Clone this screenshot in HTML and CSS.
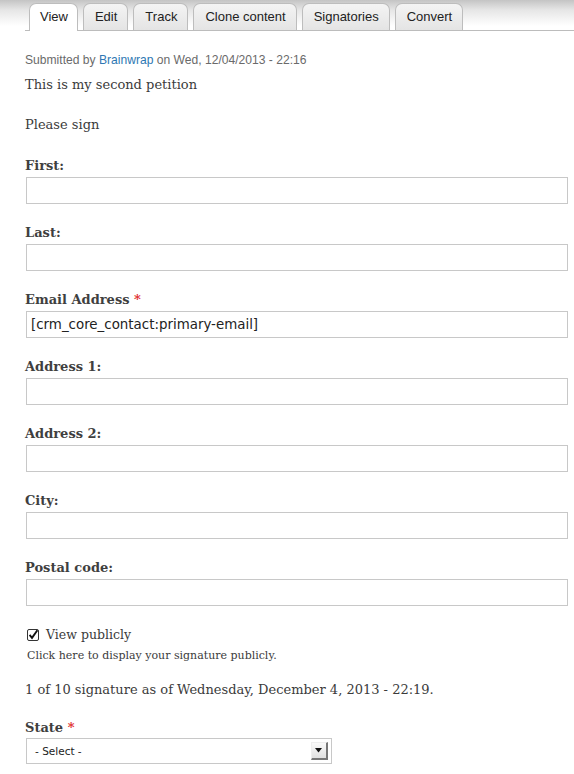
FILE: index.html
```html
<!DOCTYPE html>
<html>
<head>
<meta charset="utf-8">
<link rel="stylesheet" href="styles.css">
</head>
<body>
<div class="top">
  <ul class="tabs">
    <li class="tab active">View</li>
    <li class="tab">Edit</li>
    <li class="tab">Track</li>
    <li class="tab">Clone content</li>
    <li class="tab">Signatories</li>
    <li class="tab">Convert</li>
  </ul>
</div>
<div class="content">
  <div class="submitted">Submitted by <a href="#" class="user">Brainwrap</a> on Wed, 12/04/2013 - 22:16</div>
  <p class="body-p first-p">This is my second petition</p>
  <p class="body-p">Please sign</p>
  <form class="form">
    <div class="field"><label class="lbl">First:</label><input class="text" type="text"></div>
    <div class="field"><label class="lbl">Last:</label><input class="text" type="text"></div>
    <div class="field"><label class="lbl">Email Address <span class="req">*</span></label><input class="text" type="text" value="[crm_core_contact:primary-email]"></div>
    <div class="field"><label class="lbl">Address 1:</label><input class="text" type="text"></div>
    <div class="field"><label class="lbl">Address 2:</label><input class="text" type="text"></div>
    <div class="field"><label class="lbl">City:</label><input class="text" type="text"></div>
    <div class="field"><label class="lbl">Postal code:</label><input class="text" type="text"></div>
    <div class="check">
      <div class="check-row">
        <span class="box"><svg width="12" height="12" viewBox="0 0 12 12"><rect x="0.5" y="0.5" width="11" height="11" rx="1.5" fill="#fff" stroke="#333"/><path d="M2.6 5.8 L5 8.8 L10.4 1.2" fill="none" stroke="#111" stroke-width="1.9"/></svg></span>
        <span class="check-lbl">View publicly</span>
      </div>
      <div class="desc">Click here to display your signature publicly.</div>
    </div>
    <p class="count">1 of 10 signature as of Wednesday, December 4, 2013 - 22:19.</p>
    <div class="field state"><label class="lbl">State <span class="req">*</span></label>
      <div class="select"><span class="sel-text">- Select -</span><span class="sel-btn"><svg width="8" height="5" viewBox="0 0 8 5"><path d="M0 0H7L3.5 4.5Z" fill="#111"/></svg></span></div>
    </div>
  </form>
</div>
</body>
</html>
```

FILE: styles.css
```css
html, body {
  margin: 0;
  padding: 0;
  background: #fff;
}
body {
  font-family: "DejaVu Serif", Georgia, serif;
  color: #3b3b3b;
  width: 574px;
  overflow: hidden;
}
.top {
  background: linear-gradient(to bottom, #c4c4c4 0px, #e6e6e6 10px, #fff 26px);
  padding-top: 3px;
}
.tabs {
  list-style: none;
  margin: 0 0 0 25px;
  padding: 0 0 0 4px;
  display: flex;
  gap: 5px;
  border-bottom: 1px solid #bcbcbc;
}
.tab {
  font-family: "Liberation Sans", Arial, sans-serif;
  font-size: 13px;
  color: #222;
  height: 26px;
  line-height: 26px;
  padding: 0 10px 0 11px;
  border: 1px solid #bdbdbd;
  border-bottom: none;
  border-radius: 7px 7px 0 0;
  background: linear-gradient(to bottom, #f4f4f4, #e4e4e4);
}
.tab.active {
  background: #fff;
  margin-bottom: -1px;
  height: 27px;
  padding: 0 9px 0 10px;
}
.content {
  padding: 0 6px 0 25px;
}
.submitted {
  font-family: "Liberation Sans", Arial, sans-serif;
  font-size: 12.1px;
  color: #6a6a6a;
  margin-top: 22px;
  line-height: 15px;
}
.user {
  color: #2e77b3;
  text-decoration: none;
}
.body-p {
  font-size: 13px;
  margin: 0;
  line-height: 20px;
}
.first-p {
  margin-top: 7px;
}
.body-p + .body-p {
  margin-top: 20px;
}
.form {
  margin: 0;
  padding-top: 23px;
}
.field {
  display: flex;
  flex-direction: column;
  margin-bottom: 21px;
}
.lbl {
  font-weight: bold;
  font-size: 13px;
  line-height: 16px;
  color: #3f3f3f;
  margin-bottom: 3px;
}
.req {
  color: #e03030;
}
.text {
  box-sizing: border-box;
  margin: 0 0 0 1px;
  width: 542px;
  height: 27px;
  border: 1px solid #c8c8c8;
  border-radius: 0;
  padding: 2px 4px;
  font-family: "DejaVu Sans", sans-serif;
  font-size: 13.4px;
  color: #222;
  outline: none;
}
.check {
  margin-top: 0;
}
.check-row {
  display: flex;
  align-items: center;
  gap: 7px;
  padding-left: 2px;
}
.box {
  display: flex;
  width: 12px;
  height: 12px;
}
.check-lbl {
  font-size: 12.5px;
  line-height: 16px;
}
.desc {
  font-size: 11px;
  margin-top: 6px;
  margin-left: 2px;
  line-height: 14px;
}
.count {
  font-size: 13px;
  margin: 17px 0 0;
  line-height: 20px;
}
.state {
  margin-top: 20px;
}
.state .lbl {
  margin-bottom: 2px;
}
.select {
  box-sizing: border-box;
  margin-left: 1px;
  width: 306px;
  height: 26px;
  border: 1px solid #c8c8c8;
  display: flex;
  align-items: center;
  justify-content: space-between;
  padding: 0 3px 0 8px;
}
.sel-text {
  font-family: "DejaVu Sans", sans-serif;
  font-size: 10.5px;
  color: #222;
}
.sel-btn {
  width: 14px;
  height: 15px;
  background: linear-gradient(to bottom, #fafafa, #e0e0e0);
  border-right: 2px solid #777;
  border-bottom: 2px solid #777;
  border-top: 1px solid #eee;
  border-left: 1px solid #eee;
  display: flex;
  align-items: center;
  justify-content: center;
}
```
